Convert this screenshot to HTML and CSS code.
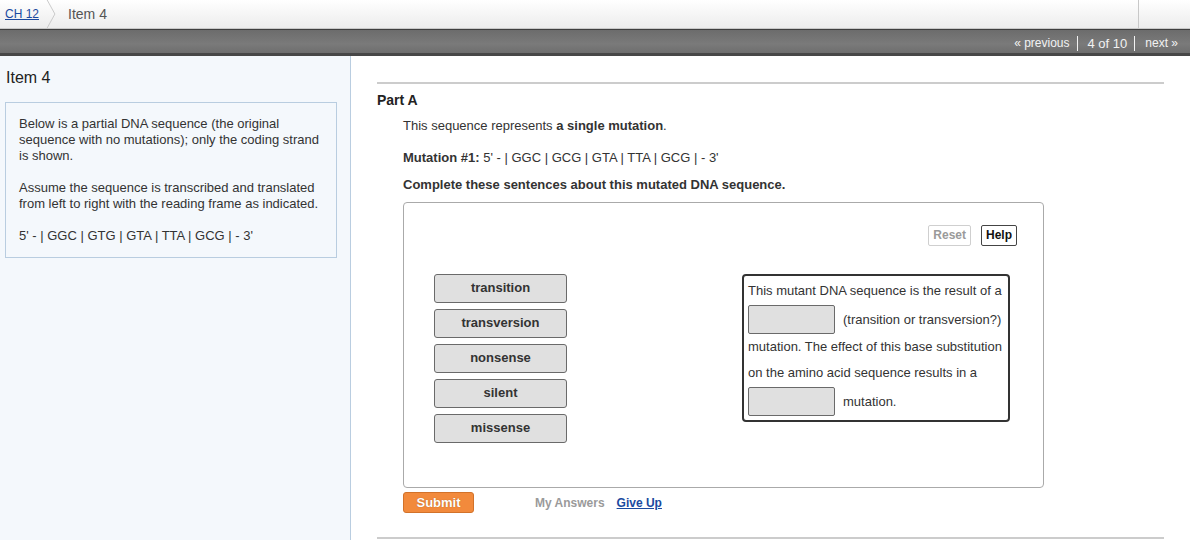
FILE: index.html
```html
<!DOCTYPE html>
<html>
<head>
<meta charset="utf-8">
<link rel="stylesheet" href="styles.css">
</head>
<body>
<div class="crumbs">
  <a class="crumb-link" href="#">CH 12</a>
  <svg class="chev" width="12" height="29" viewBox="0 0 12 29"><polyline points="1,0 9,14.5 1,29" fill="none" stroke="#c8c8c8" stroke-width="1"/></svg>
  <span class="crumb-cur">Item 4</span>
  <span class="crumb-fill"></span>
  <span class="crumb-end"></span>
</div>
<div class="navbar">
  <a class="nav-item" href="#">« previous</a>
  <span class="nav-sep"></span>
  <span class="nav-item count">4 of 10</span>
  <span class="nav-sep"></span>
  <a class="nav-item" href="#">next »</a>
</div>
<div class="main">
  <aside class="left">
    <h1 class="item-title">Item 4</h1>
    <div class="intro">
      <p>Below is a partial DNA sequence (the original sequence with no mutations); only the coding strand is shown.</p>
      <p>Assume the sequence is transcribed and translated from left to right with the reading frame as indicated.</p>
      <p>5' - | GGC | GTG | GTA | TTA | GCG | - 3'</p>
    </div>
  </aside>
  <section class="right">
    <div class="rule"></div>
    <h2 class="part">Part A</h2>
    <div class="part-body">
      <p class="q1">This sequence represents <b>a single mutation</b>.</p>
      <p class="q2"><b>Mutation #1:</b> 5' - | GGC | GCG | GTA | TTA | GCG | - 3'</p>
      <p class="q3"><b>Complete these sentences about this mutated DNA sequence.</b></p>
      <div class="work">
        <div class="tools">
          <span class="btn reset">Reset</span>
          <span class="btn help">Help</span>
        </div>
        <div class="drag-area">
          <div class="labels">
            <div class="label">transition</div>
            <div class="label">transversion</div>
            <div class="label">nonsense</div>
            <div class="label">silent</div>
            <div class="label">missense</div>
          </div>
          <div class="sentence">
            <div class="line l1">This mutant DNA sequence is the result of a</div>
            <div class="drop-row r1"><span class="drop"></span><span>(transition or transversion?)</span></div>
            <div class="line l3">mutation. The effect of this base substitution</div>
            <div class="line l4">on the amino acid sequence results in a</div>
            <div class="drop-row r2"><span class="drop"></span><span>mutation.</span></div>
          </div>
        </div>
      </div>
      <div class="actions">
        <span class="submit">Submit</span>
        <span class="my-answers">My Answers</span>
        <a class="give-up" href="#">Give Up</a>
      </div>
    </div>
    <div class="rule bottom"></div>
  </section>
</div>
</body>
</html>
```

FILE: styles.css
```css
* { box-sizing: border-box; }
html, body { margin: 0; padding: 0; }
body {
  width: 1190px;
  height: 540px;
  overflow: hidden;
  font-family: "Liberation Sans", Arial, sans-serif;
  background: #fff;
  color: #333;
}
p { margin: 0; }

.crumbs {
  height: 29px;
  display: flex;
  align-items: center;
  background: linear-gradient(#ffffff, #ececec);
  border-bottom: 1px solid #c8c8c8;
}
.crumb-link {
  margin-left: 5px;
  font-size: 12px;
  color: #1b4aa0;
  text-decoration: underline;
}
.chev { margin-left: 7px; align-self: stretch; height: 28px; }
.crumb-cur {
  margin-left: 10px;
  font-size: 14px;
  color: #555;
}
.crumb-fill { flex: 1; }
.crumb-end {
  align-self: stretch;
  width: 1px;
  background: #c8c8c8;
  margin-right: 51px;
}

.navbar {
  height: 27px;
  display: flex;
  justify-content: flex-end;
  align-items: center;
  padding-right: 12px;
  padding-top: 3px;
  background: linear-gradient(#6c6c6c, #7a7a7a 60%, #6e6e6e);
  border-top: 1px solid #3e3e3e;
  border-bottom: 3px solid #474747;
}
.nav-item {
  font-size: 12px;
  color: #f2f2f2;
  text-decoration: none;
}
.nav-item.count { font-size: 13px; }
.nav-sep {
  width: 1px;
  height: 15px;
  background: #f2f2f2;
  margin: 0 10px 0 7px;
}

.main {
  display: flex;
  height: 484px;
}
.left {
  width: 351px;
  flex: none;
  background: #f4f8fc;
  border-right: 1px solid #b9cde0;
  padding: 12px 0 0 5px;
}
.item-title {
  margin: 0 0 0 1px;
  font-size: 16px;
  font-weight: normal;
  color: #222;
  line-height: 20px;
}
.intro {
  margin-top: 14px;
  width: 332px;
  border: 1px solid #b9cde0;
  background: #f4f8fc;
  padding: 13px 12px 13px 13px;
  font-size: 13px;
  line-height: 16px;
  color: #333;
}
.intro p + p { margin-top: 16px; }

.right {
  flex: 1;
  padding: 26px 26px 0 26px;
  display: flex;
  flex-direction: column;
}
.rule {
  height: 2px;
  background: #cccccc;
}
.rule.bottom { margin-top: 24px; }
.part {
  margin: 7px 0 0 0;
  font-size: 14px;
  line-height: 18px;
  color: #222;
}
.part-body {
  margin-left: 26px;
  width: 641px;
  font-size: 13px;
  color: #333;
}
.q1 { margin-top: 9px; line-height: 16px; }
.q2 { margin-top: 16px; line-height: 16px; }
.q3 { margin-top: 11px; line-height: 16px; }

.work {
  margin-top: 9px;
  height: 286px;
  border: 1px solid #aaaaaa;
  border-radius: 4px;
  padding: 22px 26px 0 30px;
}
.tools {
  display: flex;
  justify-content: flex-end;
  gap: 10px;
}
.btn {
  height: 21px;
  padding: 0 4px;
  font-size: 12px;
  font-weight: bold;
  line-height: 19px;
  border-radius: 2px;
}
.reset { color: #9a9a9a; border: 1px solid #cfcfcf; background: #fff; }
.help { color: #111; border: 1px solid #444; background: #fff; }

.drag-area {
  margin-top: 28px;
  display: flex;
  align-items: flex-start;
}
.labels {
  width: 133px;
  display: flex;
  flex-direction: column;
  gap: 6px;
}
.label {
  height: 29px;
  border: 1px solid #6a6a6a;
  border-radius: 3px;
  background: #e0e0e0;
  font-size: 13px;
  font-weight: bold;
  color: #333;
  text-align: center;
  line-height: 26px;
}
.sentence {
  margin-left: 175px;
  width: 268px;
  height: 148px;
  border: 2px solid #333;
  border-radius: 4px;
  padding: 0 0 0 4px;
  font-size: 13px;
  color: #333;
}
.line { white-space: nowrap; }
.l1 { height: 29px; line-height: 30px; }
.l3 { height: 26px; line-height: 26px; }
.l4 { height: 26px; line-height: 26px; }
.drop-row {
  display: flex;
  align-items: center;
  height: 29px;
}
.r2 { margin-top: 1px; }
.drop {
  width: 87px;
  height: 29px;
  background: #e0e0e0;
  border: 1px solid #6a6a6a;
  border-radius: 2px;
  margin-right: 8px;
}

.actions {
  margin-top: 4px;
  display: flex;
  align-items: center;
  font-size: 12px;
  font-weight: bold;
}
.submit {
  width: 71px;
  height: 21px;
  background: #f28a3c;
  border: 1px solid #d2722a;
  border-radius: 3px;
  color: #fff;
  font-size: 13px;
  text-align: center;
  line-height: 19px;
  text-shadow: 0 0 1px rgba(120, 60, 0, 0.6);
}
.my-answers { margin-left: 61px; color: #9a9a9a; }
.give-up { margin-left: 12px; color: #1b4aa0; text-decoration: underline; }
```
